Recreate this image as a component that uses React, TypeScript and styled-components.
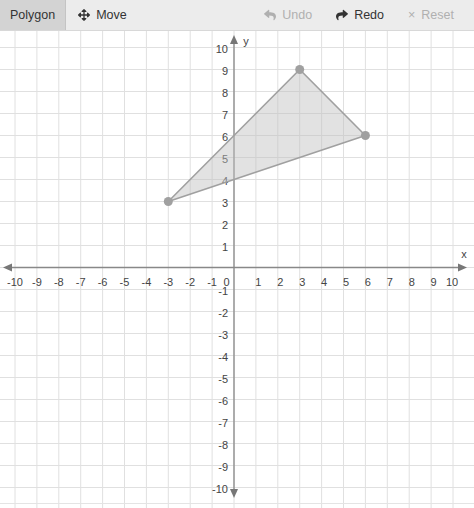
import React from 'react'
import styled, { createGlobalStyle } from 'styled-components'
import { FaArrowsAlt, FaReply, FaShare } from 'react-icons/fa'

const GlobalStyle = createGlobalStyle`
  body {
    margin: 0;
    background: #fff;
    font-family: "Liberation Sans", Arial, sans-serif;
  }
`

const Page = styled.div`
  width: 474px;
  height: 508px;
  overflow: hidden;
  display: flex;
  flex-direction: column;
`

const Toolbar = styled.div`
  height: 31px;
  flex: none;
  display: flex;
  align-items: stretch;
  background: #ececec;
  border-bottom: 1px solid #d8d8d8;
  box-sizing: border-box;
  padding-right: 8px;
`

const ToolButton = styled.button<{ $active?: boolean; $disabled?: boolean }>`
  display: flex;
  align-items: center;
  gap: 6px;
  padding: 0 ${p => (p.$active ? '10px' : '12px')};
  border: none;
  border-right: ${p => (p.$active ? '1px solid #c4c4c4' : 'none')};
  background: ${p => (p.$active ? '#d3d3d3' : 'transparent')};
  color: ${p => (p.$disabled ? '#b0b0b0' : '#333')};
  font-family: inherit;
  font-size: 12.5px;
  cursor: pointer;

  svg {
    font-size: 12px;
  }
`

const Spacer = styled.div`
  flex: 1;
`

const Board = styled.svg`
  display: block;
  flex: none;
`

const W = 474
const H = 477
const OX = 234
const OY = 236.5
const UX = 21.9
const UY = 22

const px = (i: number) => OX + i * UX
const py = (j: number) => OY - j * UY

const ticks = Array.from({ length: 23 }, (_, k) => k - 11)
const labels = Array.from({ length: 21 }, (_, k) => k - 10).filter(n => n !== 0)

const xLabelShift = (n: number) => (n > 0 && n < 10 ? 2.5 : n === 10 ? -1 : 0)

const poly: [number, number][] = [
  [-3, 3],
  [3, 9],
  [6, 6],
]

const Graph = () => (
  <Board width={W} height={H} viewBox={`0 0 ${W} ${H}`}>
    {ticks.map(i => (
      <line key={'v' + i} x1={px(i)} y1={0} x2={px(i)} y2={H} stroke="#e0e0e0" strokeWidth={1} />
    ))}
    {ticks.map(j => (
      <line key={'h' + j} x1={0} y1={py(j)} x2={W} y2={py(j)} stroke="#e0e0e0" strokeWidth={1} />
    ))}
    <line x1={0} y1={472.5} x2={W} y2={472.5} stroke="#e4e4e4" strokeWidth={1} />

    <line x1={8} y1={OY} x2={462} y2={OY} stroke="#888" strokeWidth={1.3} />
    <line x1={OX} y1={10} x2={OX} y2={462} stroke="#888" strokeWidth={1.3} />
    <polygon points={`3,${OY} 12,${OY - 4} 12,${OY + 4}`} fill="#777" />
    <polygon points={`467,${OY} 458,${OY - 4} 458,${OY + 4}`} fill="#777" />
    <polygon points={`${OX},4 ${OX - 4},13 ${OX + 4},13`} fill="#777" />
    <polygon points={`${OX},467 ${OX - 4},458 ${OX + 4},458`} fill="#777" />

    <g fontFamily='"Liberation Sans", Arial, sans-serif' fontSize={11} fill="#444">
      {labels.map(n => (
        <text key={'xl' + n} x={px(n) + xLabelShift(n)} y={OY + 18} textAnchor="middle">
          {n}
        </text>
      ))}
      {labels.map(n => (
        <text key={'yl' + n} x={OX - 6} y={py(n) + 5} textAnchor="end">
          {n}
        </text>
      ))}
      <text x={OX - 7.5} y={OY + 18} textAnchor="middle">
        0
      </text>
      <text x={464} y={OY - 10} textAnchor="middle">
        x
      </text>
      <text x={OX + 12} y={14} textAnchor="middle">
        y
      </text>
    </g>

    <polygon
      points={poly.map(([a, b]) => `${px(a)},${py(b)}`).join(' ')}
      fill="rgba(190,190,190,0.45)"
      stroke="#a0a0a0"
      strokeWidth={1.6}
      strokeLinejoin="round"
    />
    {poly.map(([a, b]) => (
      <circle key={a + ',' + b} cx={px(a)} cy={py(b)} r={4.5} fill="#a0a0a0" />
    ))}
  </Board>
)

const App = () => (
  <Page>
    <GlobalStyle />
    <Toolbar>
      <ToolButton $active>Polygon</ToolButton>
      <ToolButton>
        <FaArrowsAlt />
        Move
      </ToolButton>
      <Spacer />
      <ToolButton $disabled>
        <FaReply />
        Undo
      </ToolButton>
      <ToolButton>
        <FaShare />
        Redo
      </ToolButton>
      <ToolButton $disabled>
        <span>×</span>
        Reset
      </ToolButton>
    </Toolbar>
    <Graph />
  </Page>
)

export default App
